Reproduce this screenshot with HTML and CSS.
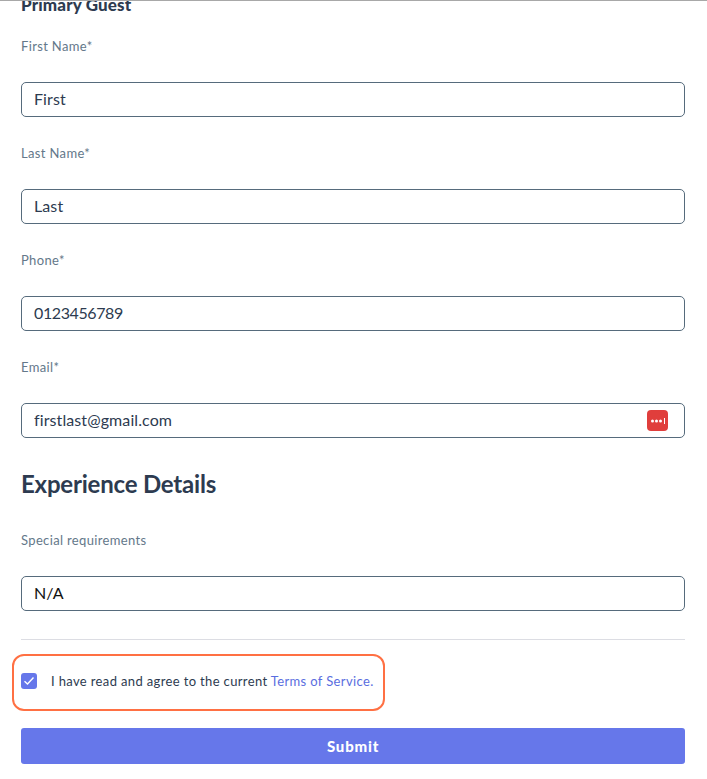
FILE: index.html
```html
<!DOCTYPE html>
<html lang="en">

<head>
  <meta charset="UTF-8" />
  <title>Booking Form</title>
  <link rel="stylesheet" href="styles.css">
</head>

<body>
  <form class="booking-form">
    <h3 class="guest-title">Primary Guest</h3>

    <div class="field">
      <label for="firstName">First Name*</label>
      <input type="text" id="firstName" value="First" />
    </div>
    <div class="field">
      <label for="lastName">Last Name*</label>
      <input type="text" id="lastName" value="Last" />
    </div>
    <div class="field">
      <label for="phone">Phone*</label>
      <input type="text" id="phone" class="phone" value="0123456789" />
    </div>
    <div class="field">
      <label for="email">Email*</label>
      <div class="input-wrap">
        <input type="text" id="email" value="firstlast@gmail.com" />
        <span class="pass-icon">
          <svg width="16" height="6" viewBox="0 0 16 6">
            <circle cx="2.5" cy="3" r="1.5" fill="#fff" />
            <circle cx="6.5" cy="3" r="1.5" fill="#fff" />
            <circle cx="10.5" cy="3" r="1.5" fill="#fff" />
            <rect x="14" y="-2" width="1" height="10" fill="#fff" />
          </svg>
        </span>
      </div>
    </div>

    <h2 class="section-title">Experience Details</h2>

    <div class="field special">
      <label for="special">Special requirements</label>
      <input type="text" id="special" class="dark" value="N/A" />
    </div>

    <hr />

    <div class="terms">
      <span class="check">
        <svg width="12" height="10" viewBox="0 0 12 10">
          <path d="M1.5 5.2 L4.5 8 L10.5 1.5" fill="none" stroke="#fff" stroke-width="1.4" />
        </svg>
      </span>
      <span>I have read and agree to the current <a href="#">Terms of Service.</a></span>
    </div>

    <button type="button" class="submit">Submit</button>
  </form>
</body>

</html>
```

FILE: styles.css
```css
html,
body {
  height: 100%;
  overflow: hidden;
}

body {
  margin: 0;
  font-family: Lato, "Open Sans", sans-serif;
  background-color: #fff;
  border-top: 1px solid #a8a8a8;
  box-sizing: border-box;
}

.booking-form {
  padding: 0 22px 0 21px;
  margin-top: -6px;
}

.guest-title {
  margin: 0 0 -2px;
  font-size: 17px;
  line-height: 20px;
  font-weight: 900;
  letter-spacing: 0.15px;
  color: #2d3b50;
}

.field {
  height: 107px;
  padding-top: 23px;
  box-sizing: border-box;
}

.field label {
  display: block;
  height: 20px;
  margin-bottom: 26px;
  font-size: 13px;
  line-height: 20px;
  letter-spacing: 0.35px;
  color: #64788a;
}

.field input {
  display: block;
  width: 100%;
  height: 35px;
  padding: 0 12px 2px;
  box-sizing: border-box;
  border: 1px solid #566b7c;
  border-radius: 5px;
  font-family: inherit;
  font-size: 16px;
  letter-spacing: 0.1px;
  color: #2d3b50;
  background-color: #fff;
}

.field input.phone {
  letter-spacing: -0.4px;
}

.field input.dark {
  color: #111;
}

.input-wrap {
  position: relative;
}

.pass-icon {
  position: absolute;
  top: 7px;
  right: 17px;
  width: 21px;
  height: 21px;
  border-radius: 4px;
  background-color: #e03e3c;
  display: flex;
  align-items: center;
  justify-content: center;
  overflow: hidden;
}

.section-title {
  margin: 28px 0 0;
  font-size: 24px;
  line-height: 30px;
  font-weight: 700;
  letter-spacing: -0.2px;
  color: #2d3b50;
}

.field.special {
  padding-top: 31px;
  height: 122px;
}

hr {
  margin: 18px 0 0;
  border: 0;
  border-top: 1px solid #dcdde3;
}

.terms {
  display: flex;
  align-items: center;
  gap: 14px;
  width: 373px;
  height: 57px;
  margin: 14px 0 0 -9px;
  padding: 0 0 4px 9px;
  box-sizing: border-box;
  border: 2px solid #ff7043;
  border-radius: 12px;
  font-size: 13px;
  letter-spacing: 0.36px;
  color: #2d3b50;
  white-space: nowrap;
}

.terms a {
  color: #5a6ee0;
  text-decoration: none;
}

.check {
  flex: none;
  width: 16px;
  height: 16px;
  margin-left: -2px;
  border-radius: 3px;
  background-color: #6677ea;
  display: flex;
  align-items: center;
  justify-content: center;
}

.submit {
  display: block;
  width: 100%;
  height: 36px;
  margin-top: 17px;
  border: 0;
  border-radius: 3px;
  background-color: #6677ea;
  color: #fff;
  font-family: inherit;
  font-size: 15px;
  letter-spacing: 0.8px;
  font-weight: 900;
}
```
